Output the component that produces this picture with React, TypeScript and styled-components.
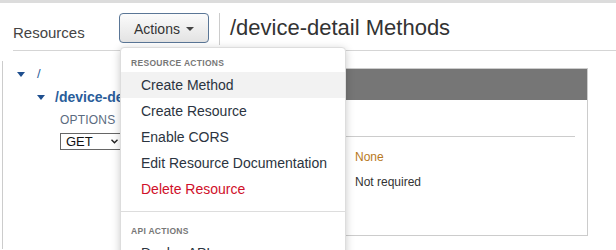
import React, { FC } from 'react'
import styled, { createGlobalStyle } from 'styled-components'

const GlobalStyle = createGlobalStyle`
  html, body {
    margin: 0;
    padding: 0;
    overflow: hidden;
    background: #fff;
  }
  body {
    font-family: "Liberation Sans", Arial, sans-serif;
    color: #333;
  }
`

const Page = styled.div`
  width: 616px;
  height: 250px;
  overflow: hidden;
  box-sizing: border-box;
  border-top: 3px solid #dcdcdc;
`

const HeaderRow = styled.div`
  display: flex;
  align-items: flex-start;
  padding-top: 10px;
`

const LeftHead = styled.div`
  margin-left: 13px;
  width: 206px;
  height: 38px;
  box-sizing: border-box;
  padding-right: 10px;
  border-bottom: 1px solid #d5d5d5;
  display: flex;
  justify-content: space-between;
  align-items: flex-start;
`

const SideTitle = styled.div`
  padding-top: 11px;
  font-size: 15px;
  line-height: 18px;
  color: #444;
`

const ActionsWrap = styled.div`
  position: relative;
`

const ActionsButton = styled.button`
  width: 90px;
  height: 30px;
  box-sizing: border-box;
  border: 1px solid #5a7696;
  border-radius: 4px;
  background: linear-gradient(#fbfbfb, #e3e3e3);
  font-family: inherit;
  font-size: 14px;
  color: #333;
  display: flex;
  align-items: center;
  justify-content: center;
  gap: 6px;
  padding: 1px 0 0;
  cursor: pointer;
`

const Caret = styled.span`
  width: 0;
  height: 0;
  border-left: 4px solid transparent;
  border-right: 4px solid transparent;
  border-top: 4px solid #444;
  margin-top: 1px;
`

const RightHead = styled.div`
  flex: 1;
  height: 37px;
  border-bottom: 1px solid #d5d5d5;
`

const Title = styled.h1`
  margin: 0;
  height: 32px;
  border-left: 1px solid #ccc;
  padding-left: 10px;
  font-size: 22px;
  line-height: 29px;
  font-weight: normal;
  color: #333;
`

const Body = styled.div`
  display: flex;
  align-items: flex-start;
`

const Sidebar = styled.div`
  margin: 10px 0 0 2px;
  width: 217px;
  height: 188px;
  border-left: 1px solid #ccc;
  padding-top: 3px;
  box-sizing: border-box;
  overflow: hidden;
`

const TreeRow = styled.div<{ $indent: number; $height: number }>`
  display: flex;
  align-items: center;
  gap: 10px;
  padding-left: ${p => p.$indent}px;
  height: ${p => p.$height}px;
  margin-top: ${p => (p.$indent > 20 ? 2 : 0)}px;
  white-space: nowrap;
`

const Toggle = styled.span`
  width: 0;
  height: 0;
  border-left: 4px solid transparent;
  border-right: 4px solid transparent;
  border-top: 5px solid #1f4f8f;
`

const RootPath = styled.span`
  font-size: 13px;
  line-height: 20px;
  color: #2a5d9a;
  margin-left: 2px;
`

const ResourcePath = styled.span`
  font-size: 14px;
  font-weight: bold;
  line-height: 22px;
  color: #2a5d9a;
`

const MethodName = styled.div`
  margin: 4px 0 0 57px;
  font-size: 12px;
  line-height: 16px;
  color: #5b6b80;
  letter-spacing: 0.2px;
`

const MethodSelect = styled.div`
  margin: 5px 0 0 57px;
  width: 62px;
  height: 17px;
  box-sizing: border-box;
  border: 1px solid #666;
  display: flex;
  align-items: center;
  justify-content: space-between;
  padding: 0 3px 0 5px;
  font-size: 13px;
  color: #111;
`

const Main = styled.div`
  flex: 1;
  padding: 17px 28px 0 10px;
`

const Panel = styled.div`
  border: 1px solid #ccc;
`

const PanelHeader = styled.div`
  height: 31px;
  background: #767676;
`

const PanelTop = styled.div`
  height: 36px;
  margin: 0 12px;
  border-bottom: 1px solid #ccc;
`

const PanelRows = styled.div`
  padding: 8px 12px 40px;
`

const InfoRow = styled.div`
  display: grid;
  grid-template-columns: 113px 1fr;
  font-size: 12px;
  line-height: 25px;
`

const InfoValue = styled.span<{ $accent?: boolean }>`
  grid-column: 2;
  color: ${p => (p.$accent ? '#b8791c' : '#333')};
`

const Menu = styled.div`
  position: absolute;
  left: 1px;
  top: calc(100% + 4px);
  width: 226px;
  box-sizing: border-box;
  background: #fff;
  border: 1px solid #ddd;
  border-radius: 4px;
  box-shadow: 0 2px 8px rgba(0, 0, 0, 0.22);
  z-index: 5;
`

const MenuLabel = styled.div<{ $first?: boolean }>`
  padding: ${p => (p.$first ? 10 : 14)}px 10px 0;
  margin-bottom: 3px;
  font-size: 8.5px;
  line-height: 11px;
  font-weight: bold;
  letter-spacing: 0.3px;
  color: #777;
`

const MenuItem = styled.div<{ $active?: boolean; $danger?: boolean }>`
  height: 26px;
  line-height: 26px;
  padding-left: 20px;
  font-size: 14px;
  white-space: nowrap;
  color: ${p => (p.$danger ? '#d0102a' : '#2b3440')};
  background: ${p => (p.$active ? '#f2f2f2' : 'transparent')};
`

const MenuDivider = styled.div`
  margin-top: 9px;
  border-top: 1px solid #ddd;
`

const resourceActions = [
  'Create Method',
  'Create Resource',
  'Enable CORS',
  'Edit Resource Documentation',
]

const apiActions = ['Deploy API', 'Import API', 'Export API']

const ActionsMenu: FC = () => (
  <Menu>
    <MenuLabel $first>RESOURCE ACTIONS</MenuLabel>
    {resourceActions.map((a, i) => (
      <MenuItem key={a} $active={i === 0}>
        {a}
      </MenuItem>
    ))}
    <MenuItem $danger>Delete Resource</MenuItem>
    <MenuDivider />
    <MenuLabel>API ACTIONS</MenuLabel>
    {apiActions.map(a => (
      <MenuItem key={a}>{a}</MenuItem>
    ))}
  </Menu>
)

const App: FC = () => {
  return (
    <>
      <GlobalStyle />
      <Page>
        <HeaderRow>
          <LeftHead>
            <SideTitle>Resources</SideTitle>
            <ActionsWrap>
              <ActionsButton>
                Actions <Caret />
              </ActionsButton>
              <ActionsMenu />
            </ActionsWrap>
          </LeftHead>
          <RightHead>
            <Title>/device-detail Methods</Title>
          </RightHead>
        </HeaderRow>
        <Body>
          <Sidebar>
            <TreeRow $indent={14} $height={20}>
              <Toggle />
              <RootPath>/</RootPath>
            </TreeRow>
            <TreeRow $indent={34} $height={22}>
              <Toggle />
              <ResourcePath>/device-detail</ResourcePath>
            </TreeRow>
            <MethodName>OPTIONS</MethodName>
            <MethodSelect>
              GET
              <svg width="7" height="5" viewBox="0 0 7 5">
                <path d="M0.5 0.8 L3.5 3.8 L6.5 0.8" fill="none" stroke="#222" strokeWidth="1.4" />
              </svg>
            </MethodSelect>
          </Sidebar>
          <Main>
            <Panel>
              <PanelHeader />
              <PanelTop />
              <PanelRows>
                <InfoRow>
                  <InfoValue $accent>None</InfoValue>
                </InfoRow>
                <InfoRow>
                  <InfoValue>Not required</InfoValue>
                </InfoRow>
              </PanelRows>
            </Panel>
          </Main>
        </Body>
      </Page>
    </>
  )
}

export default App
